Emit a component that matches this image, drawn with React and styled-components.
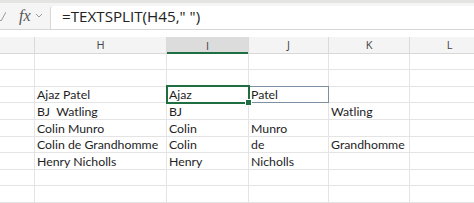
import React from 'react'
import styled, { createGlobalStyle } from 'styled-components'

const Global = createGlobalStyle`
  html, body { margin: 0; padding: 0; background: #fff; }
  body { width: 474px; height: 203px; overflow: hidden; }
`

const Sheet = styled.div`
  width: 474px;
  height: 203px;
  overflow: hidden;
  background: #fff;
  display: flex;
  flex-direction: column;
`

const FormulaBar = styled.div`
  height: 30px;
  display: flex;
  align-items: stretch;
  background: #f5f5f5;
  border-top: 3px solid #e4e4e2;
  border-bottom: 1px solid #d6d6d6;
  box-sizing: border-box;
`

const BarTools = styled.div`
  width: 50px;
  display: flex;
  align-items: center;
  gap: 4px;
  padding-left: 1px;
  box-sizing: border-box;
  color: #8a8a8a;
`

const Fx = styled.span`
  font-family: "Liberation Serif", serif;
  font-style: italic;
  font-size: 16px;
  color: #555;
  margin-left: 9px;
`

const FormulaInput = styled.div`
  flex: 1;
  background: #fff;
  border-left: 1px solid #d8d8d8;
  border-top-left-radius: 3px;
  margin-top: 3px;
  display: flex;
  align-items: center;
  padding-left: 11px;
  padding-bottom: 2px;
  font-family: "Open Sans", sans-serif;
  font-size: 15.2px;
  color: #222;
`

const Gap = styled.div`
  height: 7px;
  background: #fff;
`

const Grid = styled.div`
  display: grid;
  grid-template-columns: 35px 132px 82px 80px 81px 80px;
  grid-auto-rows: 16.6px;
`

const HeaderRow = styled.div`
  display: grid;
  grid-template-columns: 35px 132px 82px 80px 81px 80px;
  height: 16px;
  background: #f4f4f4;
  border-bottom: 1px solid #d8d8d8;
`

const ColHead = styled.div`
  display: flex;
  align-items: center;
  justify-content: center;
  border-right: 1px solid #dadada;
  font-family: "Open Sans", sans-serif;
  font-size: 11px;
  color: #444;
  background: ${p => (p.active ? '#dcdcdc' : 'transparent')};
  box-shadow: ${p => (p.active ? 'inset 0 -2px 0 #1e6e42' : 'none')};
  margin-bottom: ${p => (p.active ? '-1px' : '0')};
`

const Cell = styled.div`
  position: relative;
  border-right: 1px solid #e4e4e4;
  border-bottom: 1px solid #e4e4e4;
  box-sizing: border-box;
  padding-left: 2px;
  font-family: "Lato", sans-serif;
  font-size: 12.3px;
  line-height: 16px;
  color: #1e1e1e;
  white-space: pre;
  overflow: visible;
  display: flex;
  align-items: flex-end;
`

const Selection = styled.div`
  position: absolute;
  left: -1px;
  top: -2px;
  right: -2px;
  bottom: -2px;
  border: 2px solid #1e6e42;
  pointer-events: none;
  z-index: 2;
`

const Handle = styled.div`
  position: absolute;
  right: -4px;
  bottom: -4px;
  width: 5px;
  height: 5px;
  background: #1e6e42;
  border: 1px solid #fff;
`

const Spill = styled.div`
  position: absolute;
  left: -1px;
  top: -1px;
  right: -1px;
  bottom: -1px;
  border: 1px solid #7d8fa3;
  pointer-events: none;
  z-index: 1;
`

const Label = styled.span`
  position: relative;
  top: 1px;
`

const cols = ['', 'H', 'I', 'J', 'K', 'L']

const rows = [
  ['', '', '', '', '', ''],
  ['', '', '', '', '', ''],
  ['', 'Ajaz Patel', 'Ajaz', 'Patel', '', ''],
  ['', 'BJ  Watling', 'BJ', '', 'Watling', ''],
  ['', 'Colin Munro', 'Colin', 'Munro', '', ''],
  ['', 'Colin de Grandhomme', 'Colin', 'de', 'Grandhomme', ''],
  ['', 'Henry Nicholls', 'Henry', 'Nicholls', '', ''],
  ['', '', '', '', '', ''],
  ['', '', '', '', '', ''],
]

export default function App() {
  return (
    <Sheet>
      <Global />
      <FormulaBar>
        <BarTools>
          <svg width="8" height="12" viewBox="0 0 8 12" style={{ marginLeft: -3 }}>
            <path d="M0 8 L3 11 L8 2" fill="none" stroke="#9a9a9a" strokeWidth="1" />
          </svg>
          <Fx>fx</Fx>
          <svg width="8" height="6" viewBox="0 0 8 6">
            <path d="M1 1 L4 4 L7 1" fill="none" stroke="#9a9a9a" strokeWidth="1" />
          </svg>
        </BarTools>
        <FormulaInput>=TEXTSPLIT(H45," ")</FormulaInput>
      </FormulaBar>
      <Gap />
      <HeaderRow>
        {cols.map((c, i) => (
          <ColHead key={i} active={c === 'I'}>{c}</ColHead>
        ))}
      </HeaderRow>
      <Grid>
        {rows.map((r, ri) =>
          r.map((v, ci) => (
            <Cell key={`${ri}-${ci}`}>
              <Label>{v}</Label>
              {ri === 2 && ci === 3 && <Spill />}
              {ri === 2 && ci === 2 && (
                <Selection>
                  <Handle />
                </Selection>
              )}
            </Cell>
          ))
        )}
      </Grid>
    </Sheet>
  )
}
